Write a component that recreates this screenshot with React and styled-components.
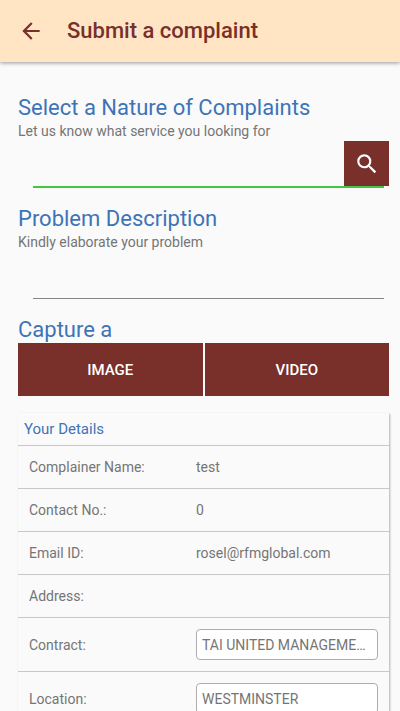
import React from 'react';
import styled, { createGlobalStyle } from 'styled-components';
import { MdArrowBack, MdSearch } from 'react-icons/md';

const GlobalStyle = createGlobalStyle`
  * {
    box-sizing: border-box;
  }

  body {
    margin: 0;
    background-color: #fafafa;
    color: #757575;
    font-family: Roboto, sans-serif;
    font-size: 14px;
    line-height: 20px;
  }

  button,
  input,
  select {
    font: inherit;
    color: inherit;
  }
`;

const Header = styled.header`
  display: flex;
  align-items: center;
  gap: 23px;
  height: 62px;
  padding: 0 18px;
  background-color: #ffe5c4;
  color: #792f2a;
  box-shadow: 0 1px 4px rgba(0, 0, 0, 0.4);
`;

const BackButton = styled.button`
  display: flex;
  padding: 0;
  border: 0;
  background: none;
  font-size: 26px;
`;

const Title = styled.h1`
  margin: 0;
  font-size: 22px;
  font-weight: 500;
  line-height: 28px;
`;

const Content = styled.main`
  display: flex;
  flex-direction: column;
  gap: 17px;
  padding: 32px 11px 0 18px;
`;

const Heading = styled.h2`
  margin: 0;
  color: #3d74b8;
  font-size: 22px;
  font-weight: 400;
  line-height: 27px;
`;

const Hint = styled.p`
  margin: 0;
`;

const Field = styled.div`
  display: grid;
`;

const TextInput = styled.input`
  grid-area: 1 / 1;
  min-width: 0;
  height: 47px;
  margin: 0 5px 0 15px;
  padding: 0 4px;
  border: 0;
  border-bottom: ${props => (props.$active ? '2px solid #43c743' : '1px solid #858585')};
  background: none;
  outline: none;
`;

const SearchButton = styled.button`
  grid-area: 1 / 1;
  justify-self: end;
  display: flex;
  align-items: center;
  justify-content: center;
  width: 45px;
  height: 45px;
  padding: 0;
  border: 0;
  background-color: #792f2a;
  color: #fff;
  font-size: 26px;
`;

const Buttons = styled.div`
  display: flex;
  gap: 2px;
`;

const CaptureButton = styled.button`
  flex: 1;
  height: 53px;
  border: 0;
  background-color: #792f2a;
  color: #fff;
  font-size: 15px;
  font-weight: 500;
`;

const Card = styled.section`
  box-shadow: 1px 1px 2px rgba(0, 0, 0, 0.3);
`;

const CardTitle = styled.h3`
  margin: 0;
  padding: 6px;
  border-bottom: 1px solid #c8c8c8;
  color: #3d74b8;
  font-size: 15px;
  font-weight: 400;
`;

const Details = styled.dl`
  margin: 0;
`;

const Row = styled.div`
  display: grid;
  grid-template-columns: 167px 1fr;
  align-items: center;
  padding: 11px;
  border-bottom: 1px solid #c8c8c8;
`;

const Value = styled.dd`
  min-width: 0;
  margin: 0;
`;

const Select = styled.select`
  display: block;
  width: 100%;
  height: 31px;
  padding: 0 5px;
  border: 1px solid #adadad;
  border-radius: 4px;
  background-color: #fff;
  appearance: none;
  text-overflow: ellipsis;
`;

const details = [
  { label: 'Complainer Name:', value: 'test' },
  { label: 'Contact No.:', value: '0' },
  { label: 'Email ID:', value: 'rosel@rfmglobal.com' },
  { label: 'Address:', value: '' },
];

const selects = [
  { id: 'contract', label: 'Contract:', value: 'TAI UNITED MANAGEMENT' },
  { id: 'location', label: 'Location:', value: 'WESTMINSTER' },
];

const App = () => (
  <>
    <GlobalStyle />
    <Header>
      <BackButton type="button" aria-label="Back">
        <MdArrowBack />
      </BackButton>
      <Title>Submit a complaint</Title>
    </Header>
    <Content>
      <section>
        <Heading>
          <label htmlFor="nature">Select a Nature of Complaints</label>
        </Heading>
        <Hint>Let us know what service you looking for</Hint>
        <Field>
          <TextInput id="nature" type="text" $active />
          <SearchButton type="button" aria-label="Search">
            <MdSearch />
          </SearchButton>
        </Field>
      </section>
      <section>
        <Heading>
          <label htmlFor="description">Problem Description</label>
        </Heading>
        <Hint>Kindly elaborate your problem</Hint>
        <Field>
          <TextInput id="description" type="text" />
        </Field>
      </section>
      <section>
        <Heading>Capture a</Heading>
        <Buttons>
          <CaptureButton type="button">IMAGE</CaptureButton>
          <CaptureButton type="button">VIDEO</CaptureButton>
        </Buttons>
      </section>
      <Card>
        <CardTitle>Your Details</CardTitle>
        <Details>
          {details.map(({ label, value }) => (
            <Row key={label}>
              <dt>{label}</dt>
              <Value>{value}</Value>
            </Row>
          ))}
          {selects.map(({ id, label, value }) => (
            <Row key={id}>
              <dt>
                <label htmlFor={id}>{label}</label>
              </dt>
              <Value>
                <Select id={id}>
                  <option>{value}</option>
                </Select>
              </Value>
            </Row>
          ))}
        </Details>
      </Card>
    </Content>
  </>
);

export default App;
